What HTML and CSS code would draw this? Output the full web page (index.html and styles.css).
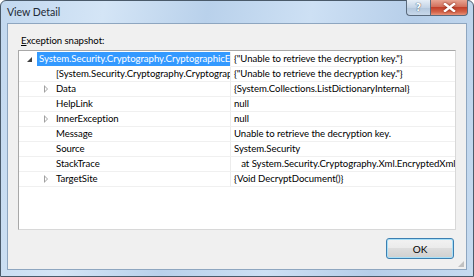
FILE: index.html
```html
<!DOCTYPE html>
<html>
<head>
<meta charset="utf-8">
<link rel="stylesheet" href="styles.css">
</head>
<body>
<div class="window">
  <div class="titlebar">
    <span class="title">View Detail</span>
    <div class="caption">
      <div class="cbtn help"><span>?</span></div>
      <div class="cbtn close">
        <svg width="13" height="9" viewBox="0 0 13 9"><path d="M2 1 L11 8 M11 1 L2 8" stroke="#fff" stroke-width="2.4" stroke-linecap="square"/></svg>
      </div>
    </div>
  </div>
  <div class="client">
    <div class="label"><u>E</u>xception snapshot:</div>
    <div class="grid">
      <div class="row sel">
        <div class="name"><span class="tri open"></span><span class="ntext">System.Security.Cryptography.CryptographicException</span></div>
        <div class="val">{"Unable to retrieve the decryption key."}</div>
      </div>
      <div class="row">
        <div class="name lvl2"><span class="tri none"></span><span class="ntext">[System.Security.Cryptography.CryptographicException]</span></div>
        <div class="val">{"Unable to retrieve the decryption key."}</div>
      </div>
      <div class="row">
        <div class="name lvl2"><span class="tri closed"></span><span class="ntext">Data</span></div>
        <div class="val">{System.Collections.ListDictionaryInternal}</div>
      </div>
      <div class="row">
        <div class="name lvl2"><span class="tri none"></span><span class="ntext">HelpLink</span></div>
        <div class="val">null</div>
      </div>
      <div class="row">
        <div class="name lvl2"><span class="tri closed"></span><span class="ntext">InnerException</span></div>
        <div class="val">null</div>
      </div>
      <div class="row">
        <div class="name lvl2"><span class="tri none"></span><span class="ntext">Message</span></div>
        <div class="val">Unable to retrieve the decryption key.</div>
      </div>
      <div class="row">
        <div class="name lvl2"><span class="tri none"></span><span class="ntext">Source</span></div>
        <div class="val">System.Security</div>
      </div>
      <div class="row">
        <div class="name lvl2"><span class="tri none"></span><span class="ntext">StackTrace</span></div>
        <div class="val">&nbsp;&nbsp;&nbsp;at System.Security.Cryptography.Xml.EncryptedXml.DecryptDocument()</div>
      </div>
      <div class="row">
        <div class="name lvl2"><span class="tri closed"></span><span class="ntext">TargetSite</span></div>
        <div class="val">{Void DecryptDocument()}</div>
      </div>
    </div>
    <div class="footer">
      <div class="okbtn">OK</div>
    </div>
    <div class="grip"></div>
  </div>
</div>
</body>
</html>
```

FILE: styles.css
```css
* { box-sizing: border-box; }
html, body { margin: 0; padding: 0; }
body {
  width: 474px;
  height: 277px;
  overflow: hidden;
  background: #ffffff;
  font-family: Lato, "Noto Sans", sans-serif;
  font-size: 9.6px;
  letter-spacing: -0.05px;
  color: #000;
}
.window {
  width: 474px;
  height: 277px;
  border: 1px solid #4a5a6a;
  border-radius: 6px 6px 0 0;
  background: linear-gradient(100deg, #c2d8ef 0%, #d4e5f6 20%, #b9d1eb 40%, #cde0f4 60%, #b6cee9 80%, #c6dbf0 100%);
  padding: 0 6px 6px 6px;
  display: flex;
  flex-direction: column;
}
.titlebar {
  height: 22px;
  display: flex;
  align-items: flex-start;
  justify-content: space-between;
  flex: none;
}
.title {
  font-size: 10.6px;
  color: #1e2a36;
  padding-top: 5px;
}
.caption {
  display: flex;
  margin-right: -1px;
  margin-top: -1px;
}
.cbtn {
  height: 16px;
  border: 1px solid #5a6a7c;
  border-top: none;
  display: flex;
  align-items: center;
  justify-content: center;
}
.help {
  width: 24px;
  border-radius: 0 0 0 4px;
  border-right: none;
  background: linear-gradient(#e6eef7, #c4d4e6 50%, #b2c6dc 51%, #c8d8ea);
}
.help span {
  font-family: "DejaVu Sans", sans-serif;
  font-size: 10px;
  font-weight: bold;
  color: #fff;
  text-shadow: 0 0 1px #4c5c70, 0 0 1px #4c5c70;
  margin-top: -1px;
}
.close {
  width: 38px;
  border-radius: 0 0 4px 0;
  background: linear-gradient(#e8a593, #d2705c 45%, #c2402a 50%, #d4644a 80%, #e8947c);
}
.close svg { filter: drop-shadow(0 0 1px #7a2010); }
.client {
  flex: 1;
  background: #f0f0f0;
  border: 1px solid #8ea6c0;
  position: relative;
  padding: 10px 10px 10px 10px;
  display: flex;
  flex-direction: column;
}
.label {
  padding-left: 3px;
  height: 16px;
  line-height: 14px;
}
.grid {
  height: 180px;
  background: #fff;
  border: 1px solid;
  border-color: #a8a8a8 #d8d8d8 #d8d8d8 #a8a8a8;
  padding-top: 1px;
  flex: none;
  overflow: hidden;
}
.row {
  display: flex;
  height: 15px;
  line-height: 14px;
  white-space: nowrap;
}
.name {
  width: 212px;
  flex: none;
  display: flex;
  align-items: center;
  overflow: hidden;
  padding-left: 6px;
  border-bottom: 1px solid #f0f0f0;
  border-right: 1px solid #ececec;
}
.val { border-bottom: 1px solid #f0f0f0; }
.lvl2 { padding-left: 23px; }
.tri {
  width: 12px;
  height: 14px;
  flex: none;
  position: relative;
}
.tri.open::before {
  content: "";
  position: absolute;
  left: 2px;
  top: 5px;
  width: 0; height: 0;
  border-left: 5px solid transparent;
  border-bottom: 5px solid #404040;
}
.tri.closed::before {
  content: "";
  position: absolute;
  left: 2px;
  top: 3px;
  width: 0; height: 0;
  border-top: 4px solid transparent;
  border-bottom: 4px solid transparent;
  border-left: 4px solid #a0a0a0;
}
.tri.closed::after {
  content: "";
  position: absolute;
  left: 3px;
  top: 5px;
  width: 0; height: 0;
  border-top: 2px solid transparent;
  border-bottom: 2px solid transparent;
  border-left: 2px solid #fff;
}
.ntext {
  padding-left: 2px;
  overflow: hidden;
  flex: 1;
  height: 14px;
}
.sel .ntext {
  background: #3399ff;
  color: #fff;
}
.sel .name { border-bottom-color: #fff; }
.val {
  flex: 1;
  padding-left: 3px;
  overflow: hidden;
}
.footer {
  flex: 1;
  display: flex;
  justify-content: flex-end;
  align-items: flex-end;
  padding-right: 2px;
}
.okbtn {
  width: 68px;
  height: 21px;
  border: 1px solid #3c7fb1;
  border-radius: 3px;
  background: linear-gradient(#f2f2f2, #ebebeb 45%, #dddddd 50%, #cfcfcf);
  box-shadow: inset 0 0 0 1px #a8e0f8;
  display: flex;
  align-items: center;
  justify-content: center;
  font-size: 10px;
}
.grip {
  position: absolute;
  right: 2px;
  bottom: 2px;
  width: 6px;
  height: 6px;
  background: radial-gradient(circle, #b0b0b0 0.6px, transparent 1px) 0 0 / 2px 2px;
  clip-path: polygon(100% 0, 100% 100%, 0 100%);
}
```
